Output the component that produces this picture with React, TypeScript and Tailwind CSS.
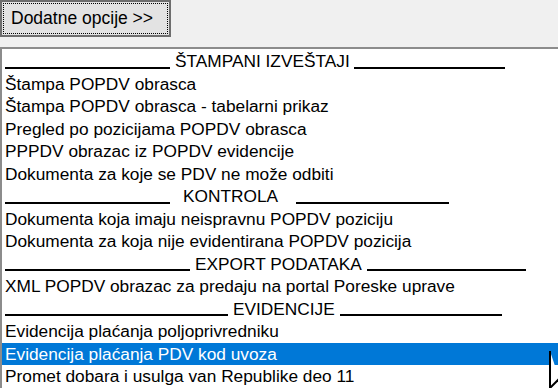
import React from 'react';

type Row = { text?: string; header?: string; selected?: boolean };

const rows: Row[] = [
  { header: 'ŠTAMPANI IZVEŠTAJI' },
  { text: 'Štampa POPDV obrasca' },
  { text: 'Štampa POPDV obrasca - tabelarni prikaz' },
  { text: 'Pregled po pozicijama POPDV obrasca' },
  { text: 'PPPDV obrazac iz POPDV evidencije' },
  { text: 'Dokumenta za koje se PDV ne može odbiti' },
  { header: 'KONTROLA' },
  { text: 'Dokumenta koja imaju neispravnu POPDV poziciju' },
  { text: 'Dokumenta za koja nije evidentirana POPDV pozicija' },
  { header: 'EXPORT PODATAKA' },
  { text: 'XML POPDV obrazac za predaju na portal Poreske uprave' },
  { header: 'EVIDENCIJE' },
  { text: 'Evidencija plaćanja poljoprivredniku' },
  { text: 'Evidencija plaćanja PDV kod uvoza', selected: true },
  { text: 'Promet dobara i usulga van Republike deo 11' },
];

// left line width, gap before label, gap after label, right line width
const lines: Record<string, [number, number, number, number]> = {
  'ŠTAMPANI IZVEŠTAJI': [165, 5, 4, 151],
  KONTROLA: [165, 13, 18, 153],
  'EXPORT PODATAKA': [185, 5, 5, 159],
  EVIDENCIJE: [223, 5, 5, 162],
};

function Header({ label }: { label: string }) {
  const [l, g1, g2, r] = lines[label];
  return (
    <div className="flex items-end h-full">
      <span className="flex-none border-b-2 border-black mb-[4px]" style={{ width: l }} />
      <span className="whitespace-nowrap" style={{ marginLeft: g1, marginRight: g2 }}>
        {label}
      </span>
      <span className="flex-none border-b-2 border-black mb-[4px]" style={{ width: r }} />
    </div>
  );
}

function Cursor() {
  return (
    <svg className="absolute left-[549px] top-[350px]" width="16" height="40" viewBox="0 0 16 40">
      <path d="M1 1 L1 38 L9 30 L14 40" fill="white" stroke="black" strokeWidth="2" />
    </svg>
  );
}

export default function App() {
  return (
    <div
      className="relative w-[558px] h-[388px] overflow-hidden bg-[#f0f0f0] text-black"
      style={{ fontFamily: '"Liberation Sans", Arial, sans-serif' }}
    >
      <div className="h-[47px]">
        <button className="w-[171px] h-[37px] border-2 border-[#6e6e6e] bg-[#e3e3e3] p-[1px]">
          <div className="h-full w-full border border-dotted border-black flex items-center pl-[7px] text-[17.5px] leading-none">
            Dodatne opcije &gt;&gt;
          </div>
        </button>
      </div>
      <div className="h-[341px] border-t-2 border-l-2 border-[#8c8c8c] bg-white pt-[1px]">
        {rows.map((r, i) => (
          <div
            key={i}
            className={`h-[22.5px] pl-[3px] text-[17.3px] leading-[22.5px] whitespace-nowrap ${
              r.selected ? 'bg-[#0078d7] text-white' : ''
            }`}
          >
            {r.header ? <Header label={r.header} /> : r.text}
          </div>
        ))}
      </div>
      <Cursor />
    </div>
  );
}
